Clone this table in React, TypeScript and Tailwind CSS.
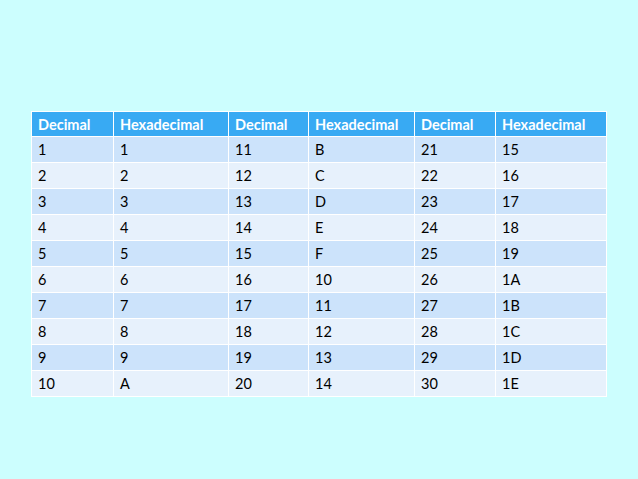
const rows = [
  ["1", "1", "11", "B", "21", "15"],
  ["2", "2", "12", "C", "22", "16"],
  ["3", "3", "13", "D", "23", "17"],
  ["4", "4", "14", "E", "24", "18"],
  ["5", "5", "15", "F", "25", "19"],
  ["6", "6", "16", "10", "26", "1A"],
  ["7", "7", "17", "11", "27", "1B"],
  ["8", "8", "18", "12", "28", "1C"],
  ["9", "9", "19", "13", "29", "1D"],
  ["10", "A", "20", "14", "30", "1E"],
];

const headers = ["Decimal", "Hexadecimal", "Decimal", "Hexadecimal", "Decimal", "Hexadecimal"];
const widths = ["w-[82px]", "w-[115px]", "w-[80px]", "w-[106px]", "w-[81px]", "w-[111px]"];

export default function App() {
  return (
    <div className="w-[638px] h-[479px] bg-[#ccfefe] pt-[111px] pl-[31px] font-['Lato','Liberation_Sans',sans-serif]">
      <table className="border-collapse table-fixed w-[575px] text-[14.5px]">
        <thead>
          <tr className="h-[25px] bg-[#38aaf3] text-white">
            {headers.map((h, i) => (
              <th key={i} className={`${widths[i]} border border-white text-left font-bold pl-[6px] pt-[1px]`}>
                {h}
              </th>
            ))}
          </tr>
        </thead>
        <tbody>
          {rows.map((r, i) => (
            <tr key={i} className={`h-[26px] ${i % 2 === 0 ? "bg-[#cce3fb]" : "bg-[#e7f1fc]"} text-black`}>
              {r.map((c, j) => (
                <td key={j} className="border border-white pl-[6px] pt-[1px]">
                  {c}
                </td>
              ))}
            </tr>
          ))}
        </tbody>
      </table>
    </div>
  );
}
